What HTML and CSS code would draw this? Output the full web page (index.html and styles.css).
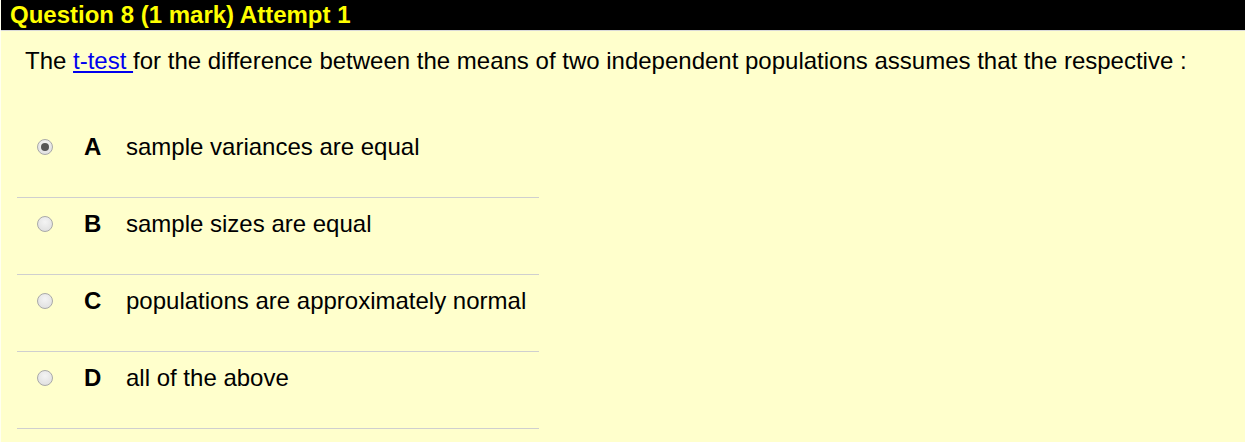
FILE: index.html
```html
<!DOCTYPE html>
<html>
<head>
<meta charset="utf-8">
<link rel="stylesheet" href="styles.css">
</head>
<body>
<div class="page">
  <div class="qhead">Question 8 (1 mark) Attempt 1</div>
  <div class="qbody">
    <p class="qtext">The <a href="#">t-test </a>for the difference between the means of two independent populations assumes that the respective :</p>
    <div class="options">
      <div class="opt">
        <span class="radio checked"></span>
        <span class="letter">A</span>
        <span class="otext">sample variances are equal</span>
      </div>
      <div class="opt">
        <span class="radio"></span>
        <span class="letter">B</span>
        <span class="otext">sample sizes are equal</span>
      </div>
      <div class="opt">
        <span class="radio"></span>
        <span class="letter">C</span>
        <span class="otext">populations are approximately normal</span>
      </div>
      <div class="opt">
        <span class="radio"></span>
        <span class="letter">D</span>
        <span class="otext">all of the above</span>
      </div>
    </div>
  </div>
</div>
</body>
</html>
```
FILE: styles.css
```css
html, body {
  margin: 0;
  padding: 0;
  background: #ffffcc;
}
body {
  font-family: "Liberation Sans", Arial, sans-serif;
  color: #000;
}
.page {
  width: 1245px;
  height: 442px;
  background: #ffffcc;
  border-left: 1px solid #fffff0;
  box-sizing: border-box;
}
.qhead {
  background: #000;
  color: #ffff00;
  font-weight: bold;
  font-size: 24px;
  line-height: 30px;
  height: 30px;
  padding-left: 9px;
  border-bottom: 1px solid #d8d8d8;
  white-space: nowrap;
}
.qbody {
  padding: 0 0 0 16px;
}
.qtext {
  margin: 0;
  padding: 17px 0 0 8px;
  font-size: 24px;
  line-height: 26px;
  height: 73px;
  white-space: nowrap;
}
.qtext a {
  color: #0000ee;
  text-decoration: underline;
}
.options {
  width: 522px;
}
.opt {
  display: flex;
  align-items: center;
  height: 76px;
  box-sizing: content-box;
  border-bottom: 1px solid #cfcfcf;
  padding-bottom: 0;
  font-size: 24px;
}
.opt > * {
  margin-bottom: 25px;
}
.radio {
  width: 16px;
  height: 16px;
  border-radius: 50%;
  box-sizing: border-box;
  border: 1px solid #a9a9a9;
  background: radial-gradient(circle at 50% 35%, #f4f4f4 0%, #dcdcdc 100%);
  margin-left: 20px;
  flex: none;
  position: relative;
}
.radio.checked::after {
  content: "";
  position: absolute;
  left: 3px;
  top: 3px;
  width: 8px;
  height: 8px;
  border-radius: 50%;
  background: #555;
}
.letter {
  font-weight: bold;
  margin-left: 31px;
  width: 42px;
}
.otext {
  white-space: nowrap;
}
```
